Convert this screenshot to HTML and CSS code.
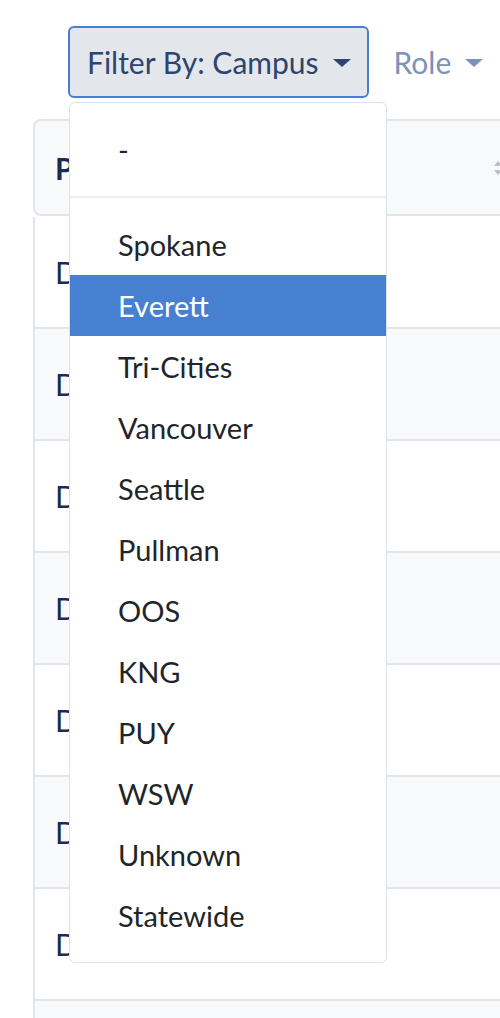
FILE: index.html
```html
<!DOCTYPE html>
<html lang="en">
  <head>
    <meta charset="UTF-8" />
    <meta name="viewport" content="width=device-width, initial-scale=1.0" />
    <title>Staff Directory</title>
    <link rel="stylesheet" href="styles.css">
  </head>
  <body>
    <div id="page">
      <div class="filters">
        <button class="filter-btn active">Filter By: Campus<span class="caret"></span></button>
        <button class="filter-btn plain">Role<span class="caret"></span></button>
      </div>

      <div class="dropdown-menu">
        <a class="dropdown-item">-</a>
        <div class="dropdown-divider"></div>
        <a class="dropdown-item">Spokane</a>
        <a class="dropdown-item selected">Everett</a>
        <a class="dropdown-item">Tri-Cities</a>
        <a class="dropdown-item">Vancouver</a>
        <a class="dropdown-item">Seattle</a>
        <a class="dropdown-item">Pullman</a>
        <a class="dropdown-item">OOS</a>
        <a class="dropdown-item">KNG</a>
        <a class="dropdown-item">PUY</a>
        <a class="dropdown-item">WSW</a>
        <a class="dropdown-item">Unknown</a>
        <a class="dropdown-item">Statewide</a>
      </div>

      <div class="table">
        <div class="table-head">
          <div class="cell first">P</div>
          <div class="cell sort">
            <svg width="10" height="16" viewBox="0 0 10 16">
              <path d="M5 1 L9 6 H1 Z M5 15 L9 10 H1 Z" fill="#b9bfc8" />
            </svg>
          </div>
        </div>
        <div class="table-body">
          <div class="row"><div class="cell first">D</div></div>
          <div class="row alt"><div class="cell first">D</div></div>
          <div class="row"><div class="cell first">D</div></div>
          <div class="row alt"><div class="cell first">D</div></div>
          <div class="row"><div class="cell first">D</div></div>
          <div class="row alt"><div class="cell first">D</div></div>
          <div class="row"><div class="cell first">D</div></div>
          <div class="row alt"></div>
        </div>
      </div>
    </div>
  </body>
</html>
```

FILE: styles.css
```css
body {
  margin: 0;
  overflow: hidden;
  font-family: "Lato", "Open Sans", sans-serif;
  background-color: white;
}
#page {
  position: relative;
  width: 500px;
  height: 1018px;
  overflow: hidden;
}
.filters {
  display: flex;
  align-items: center;
  padding: 26px 0 0 68px;
}
.filter-btn {
  display: flex;
  align-items: center;
  height: 72px;
  box-sizing: border-box;
  font-family: inherit;
  font-size: 30px;
  border-radius: 6px;
  white-space: nowrap;
  cursor: pointer;
}
.filter-btn.active {
  padding: 0 16px 0 17px;
  color: rgb(46, 68, 112);
  background-color: rgb(227, 231, 236);
  border: 2px solid rgb(74, 127, 208);
}
.filter-btn.plain {
  padding: 0 0 0 25px;
  color: rgb(125, 146, 183);
  background: none;
  border: none;
}
.caret {
  display: inline-block;
  margin-left: 14px;
  border-top: 8px solid currentColor;
  border-left: 9.5px solid transparent;
  border-right: 9.5px solid transparent;
  margin-top: 2px;
}
.dropdown-menu {
  position: absolute;
  top: 102px;
  left: 69px;
  width: 318px;
  box-sizing: border-box;
  padding: 16px 0;
  background-color: white;
  border: 1px solid rgb(221, 226, 232);
  border-radius: 6px;
  z-index: 2;
}
.dropdown-item {
  display: block;
  padding: 8px 48px;
  height: 45px;
  line-height: 45px;
  font-size: 29px;
  color: rgb(33, 37, 41);
}
.dropdown-item.selected {
  color: white;
  background-color: rgb(71, 128, 209);
}
.dropdown-divider {
  height: 2px;
  margin: 16px 0;
  background-color: rgb(236, 239, 243);
}
.table {
  width: 700px;
  margin: 21px 0 0 33px;
}
.table-head {
  display: flex;
  align-items: center;
  height: 97px;
  box-sizing: border-box;
  background-color: rgb(248, 249, 250);
  border: 2px solid rgb(225, 229, 236);
  border-radius: 8px;
  font-weight: bold;
  color: rgb(27, 42, 78);
  font-size: 30px;
}
.table-head .cell.first {
  width: 458px;
  padding-left: 20px;
  box-sizing: border-box;
}
.table-body {
  border-left: 2px solid rgb(225, 229, 236);
  margin-top: 1px;
}
.row {
  display: flex;
  align-items: center;
  height: 112px;
  box-sizing: border-box;
  border-bottom: 2px solid rgb(225, 229, 236);
  color: rgb(27, 42, 78);
  font-size: 30px;
}
.row.alt {
  background-color: rgb(249, 250, 251);
}
.row .cell.first {
  padding-left: 20px;
}
.sort {
  display: flex;
  align-items: center;
}
```
